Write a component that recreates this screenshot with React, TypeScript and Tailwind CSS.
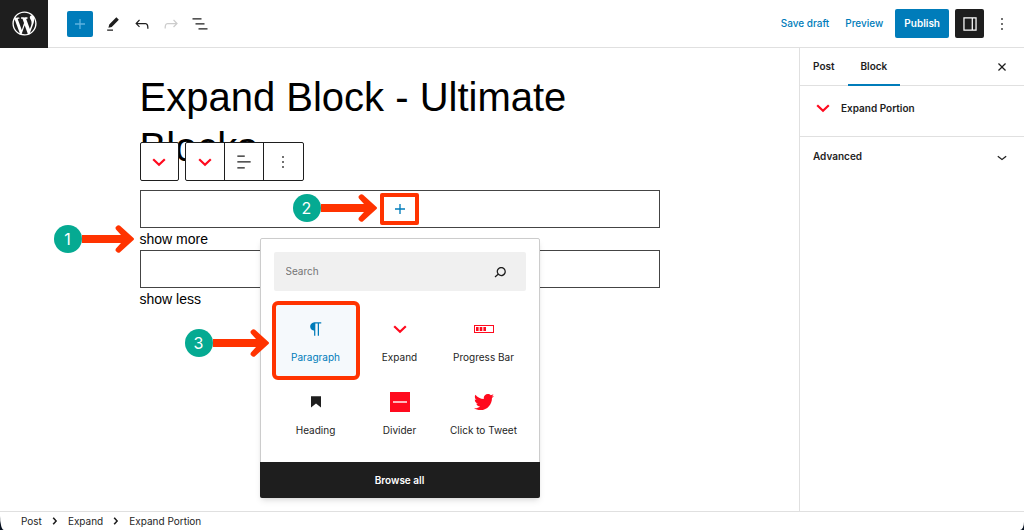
import React, { useState } from 'react'
import { FaTwitter } from 'react-icons/fa'

const icons = {
  plus: 'M18 11.2h-5.2V6h-1.6v5.2H6v1.6h5.2V18h1.6v-5.2H18z',
  edit: 'm19 7-3-3-8.5 8.5-1 4 4-1L19 7Zm-7 11.5H5V20h7v-1.5Z',
  undo: 'M18.3 11.7c-.6-.6-1.4-.9-2.3-.9H6.7l2.9-3.3-1.1-1-4.5 5L8.5 16l1-1-2.7-2.7H16c.5 0 .9.2 1.3.5 1 1 1 3.4 1 4.5v.3h1.5v-.2c0-1.5 0-4.3-1.5-5.7z',
  redo: 'M15.6 6.5l-1.1 1 2.9 3.3H8c-.9 0-1.7.3-2.3.9-1.4 1.5-1.4 4.2-1.4 5.6v.2h1.5v-.3c0-1.1 0-3.5 1-4.5.3-.3.7-.5 1.3-.5h9.2L14.5 15l1.1 1.1 4.6-4.6-4.6-5z',
  listView: 'M13.8 5.2H3v1.5h10.8V5.2zm-3.6 12v1.5H21v-1.5H10.2zm7.2-6H6.6v1.5h10.8v-1.5z',
  sidebar: 'M4 4h16v16H4V4zm1.5 1.5v13H14v-13H5.5zm10 0v13h3v-13h-3z',
  more: 'M13 19h-2v-2h2v2zm0-6h-2v-2h2v2zm0-6h-2V5h2v2z',
  close: 'M12 13.06l3.712 3.713 1.061-1.06L13.061 12l3.712-3.712-1.06-1.06L12 10.938 8.288 7.227l-1.061 1.06L10.939 12l-3.712 3.712 1.06 1.061L12 13.061z',
  chevronDown: 'M17.5 11.6L12 16l-5.5-4.4.9-1.2L12 14l4.5-3.6 1 1.2z',
  chevronRight: 'M10.2 6.2 8.4 7.7 12.2 12l-3.8 4.3 1.8 1.5L15.2 12z',
  alignLeft: 'M4 19.8h8.9v-1.5H4v1.5zm8.9-15.6H4v1.5h8.9V4.2zm-8.9 7v1.5h16v-1.5H4z',
  search: 'M13.5 6C10.5 6 8 8.5 8 11.5c0 1.1.3 2.1.9 3l-3.4 3 1 1.1 3.4-2.9c1 .9 2.2 1.4 3.6 1.4 3 0 5.5-2.5 5.5-5.5C19 8.500 16.500 6 13.500 6zm0 9.500c-2.200 0-4-1.800-4-4s1.800-4 4-4 4 1.800 4 4-1.800 4-4 4z',
  paragraph: 'M18.3 4H9.9v-.1l-.9.2c-2.3.4-4 2.4-4 4.8s1.7 4.4 4 4.8l.7.1V20h1.5V5.5h2.9V20h1.5V5.5h2.7V4z',
  heading: 'M6 5V18.5911L12 13.8473L18 18.5911V5H6Z',
}

interface IconProps {
  name: keyof typeof icons
  className?: string
}

const Icon: React.FC<IconProps> = ({ name, className = 'size-5' }) => (
  <svg viewBox="0 0 24 24" fill="currentColor" className={className} aria-hidden="true">
    <path d={icons[name]} />
  </svg>
)

const WordPressLogo: React.FC = () => (
  <svg viewBox="-2 -2 24 24" fill="currentColor" className="size-[29px]" aria-hidden="true">
    <path d="M20 10c0-5.51-4.49-10-10-10C4.48 0 0 4.49 0 10c0 5.52 4.48 10 10 10 5.51 0 10-4.48 10-10zM7.78 15.37L4.37 6.22c.55-.02 1.17-.08 1.17-.08.5-.06.44-1.13-.06-1.11 0 0-1.45.11-2.37.11-.18 0-.37 0-.58-.01C4.12 2.69 6.87 1.11 10 1.11c2.33 0 4.45.87 6.05 2.34-.68-.11-1.65.39-1.65 1.58 0 .74.45 1.36.9 2.1.35.61.55 1.36.55 2.46 0 1.49-1.4 5-1.4 5l-3.03-8.37c.54-.02.82-.17.82-.17.5-.05.44-1.25-.06-1.22 0 0-1.44.12-2.38.12-.87 0-2.33-.12-2.33-.12-.5-.03-.56 1.2-.06 1.22l.92.08 1.26 3.41zM17.41 10c.24-.64.74-1.87.43-4.25.7 1.29 1.05 2.71 1.05 4.25 0 3.29-1.73 6.24-4.4 7.78.97-2.59 1.94-5.2 2.92-7.78zM6.1 18.09C3.12 16.65 1.11 13.53 1.11 10c0-1.3.23-2.48.72-3.59C3.25 10.3 4.67 14.2 6.1 18.09zm4.03-6.63l2.58 6.98c-.86.29-1.76.45-2.71.45-.79 0-1.57-.11-2.29-.33.81-2.38 1.62-4.74 2.42-7.1z" />
  </svg>
)

const ExpandIcon: React.FC = () => (
  <svg viewBox="0 0 20 20" fill="none" className="size-5 text-[#ff0a1e]" aria-hidden="true">
    <path d="M4.2 7.2 10 12.8l5.8-5.6" stroke="currentColor" strokeWidth="2.2" />
  </svg>
)

const ProgressBarIcon: React.FC = () => (
  <svg viewBox="0 0 20 20" className="size-5 text-[#ff0a1e]" aria-hidden="true">
    <rect x="0.5" y="6.5" width="19" height="7" fill="none" stroke="currentColor" />
    <path d="M2 8h2.6v4H2zM5.700 8h2.600v4H5.700zM9.400 8h2.600v4H9.400z" fill="currentColor" />
  </svg>
)

const DividerIcon: React.FC = () => (
  <svg viewBox="0 0 20 20" className="size-5" aria-hidden="true">
    <rect width="20" height="20" fill="#ff0a1e" />
    <rect x="3" y="9.3" width="14" height="1.4" fill="#fff" />
  </svg>
)

const blocks = [
  { label: 'Paragraph', icon: <Icon name="paragraph" /> },
  { label: 'Expand', icon: <ExpandIcon /> },
  { label: 'Progress Bar', icon: <ProgressBarIcon /> },
  { label: 'Heading', icon: <Icon name="heading" /> },
  { label: 'Divider', icon: <DividerIcon /> },
  { label: 'Click to Tweet', icon: <FaTwitter className="size-5 text-[#ff0a1e]" /> },
]

// Numbered marker with an arrow pointing to the right
const Step: React.FC<{ number: number; className: string }> = ({ number, className }) => (
  <div className={`absolute flex items-center font-[Inter,sans-serif] ${className}`}>
    <span className="flex size-7 items-center justify-center rounded-full bg-[#05aa92] text-base text-white">
      {number}
    </span>
    <span className="h-2 flex-1 bg-[#ff3300]" />
    <svg viewBox="0 0 19 28" className="h-7 w-[19px]" fill="#ff3300" aria-hidden="true">
      <path d="M0 10h6L1 4.5Q0 3 1 1.8L2.500.6Q4-.2 5 .8L18.500 13q1 1 0 2L5 27.200q-1 1-2.500.200L1 26.200q-1-1.200 0-2.700L6 18H0z" />
    </svg>
  </div>
)

const Inserter: React.FC = () => {
  const [query, setQuery] = useState('')
  const visible = blocks.filter(b => b.label.toLowerCase().includes(query.toLowerCase()))

  return (
    <div className="absolute top-12 left-1/2 z-10 w-[280px] -translate-x-1/2 rounded-xs border border-[#ccc] bg-white font-[Inter,sans-serif] text-[10px] text-[#1e1e1e] shadow-md">
      <div className="px-[13px] pt-[13px]">
        <div className="flex h-[39px] items-center rounded-xs bg-[#f0f0f0] pr-4 pl-3">
          <input
            aria-label="Search"
            value={query}
            onChange={e => setQuery(e.target.value)}
            placeholder="Search"
            className="min-w-0 flex-1 bg-transparent text-[10px] outline-none placeholder:text-[#757575]"
          />
          <Icon name="search" />
        </div>
      </div>
      <div className="grid grid-cols-3 px-[13px] pt-[13px] pb-3">
        {visible.map(block => (
          <button
            key={block.label}
            className="group relative flex h-[73px] flex-col items-center justify-center gap-2.5 pt-0.5 whitespace-nowrap first:bg-[#f5f9fc] first:text-[#007cba]"
          >
            {block.icon}
            <span className="leading-4">{block.label}</span>
            <span className="absolute -inset-x-0.5 -inset-y-[3px] hidden rounded-md border-4 border-[#ff3300] group-first:block" />
          </button>
        ))}
      </div>
      <button className="-mx-px -mb-px block h-9 w-[280px] rounded-b-xs bg-[#1e1e1e] font-semibold text-white">
        Browse all
      </button>
    </div>
  )
}

const App: React.FC = () => {
  const [tab, setTab] = useState('Block')

  return (
    <div className="bg-[#06101f]">
      <div className="flex min-h-screen flex-col overflow-hidden rounded-br-[4px_8px] rounded-bl-[4px_14px] bg-white font-[Inter,sans-serif] text-[10px] text-[#1e1e1e]">
        {/* Top toolbar */}
        <header className="flex h-12 items-center border-b border-[#e0e0e0]">
          <a href="#posts" aria-label="View posts" className="flex size-12 items-center justify-center bg-[#1e1e1e] text-white">
            <WordPressLogo />
          </a>
          <div className="ml-[19px] flex items-center gap-[9px]">
            <button aria-label="Add block" className="mr-px flex size-[26px] items-center justify-center rounded-xs bg-[#007cba] text-[#5eb3e0]">
              <Icon name="plus" />
            </button>
            <button aria-label="Tools"><Icon name="edit" /></button>
            <button aria-label="Undo"><Icon name="undo" /></button>
            <button aria-label="Redo" disabled className="text-[#ccc]"><Icon name="redo" /></button>
            <button aria-label="List view"><Icon name="listView" /></button>
          </div>
          <div className="ml-auto flex items-center">
            <button className="font-medium text-[#007cba]">Save draft</button>
            <button className="ml-4 font-medium text-[#007cba]">Preview</button>
            <button className="ml-3 h-[29px] rounded-xs bg-[#007cba] px-[9px] font-semibold text-white">Publish</button>
            <button aria-label="Settings" className="ml-1.5 flex size-[29px] items-center justify-center rounded-xs bg-[#1e1e1e] text-white">
              <Icon name="sidebar" />
            </button>
            <button aria-label="Options" className="mr-3 ml-2"><Icon name="more" /></button>
          </div>
        </header>

        <div className="flex flex-1">
          {/* Editor canvas */}
          <main className="flex-1">
            <div className="relative mx-auto w-[520px] max-w-full pt-6 font-['Liberation_Sans',sans-serif] text-sm text-black">
              <h1 className="text-[40px] leading-[50px]">Expand Block - Ultimate Blocks</h1>

              <div className="absolute top-[94px] left-0 flex gap-1.5 text-[#1e1e1e]">
                <button aria-label="Select parent block" className="flex size-[39px] items-center justify-center rounded-xs border border-[#1e1e1e] bg-white">
                  <ExpandIcon />
                </button>
                <div className="flex h-[39px] divide-x divide-[#1e1e1e] rounded-xs border border-[#1e1e1e] bg-white">
                  <button aria-label="Expand Portion" className="flex w-[39px] items-center justify-center"><ExpandIcon /></button>
                  <button aria-label="Align" className="flex w-[39px] items-center justify-center"><Icon name="alignLeft" /></button>
                  <button aria-label="Options" className="flex w-[39px] items-center justify-center"><Icon name="more" /></button>
                </div>
              </div>

              <div className="relative mt-[18px]">
                <div className="flex h-[38px] items-center justify-center border border-[#444]">
                  <button aria-label="Add block" className="flex h-8 w-[39px] items-center justify-center rounded-xs border-4 border-[#ff3300] text-[#007cba]">
                    <Icon name="plus" />
                  </button>
                </div>
                <Step number={2} className="top-1 left-[153px] w-[84px]" />
                <Inserter />
              </div>
              <p className="leading-[22px]">show more</p>
              <div className="h-[38px] border border-[#444]" />
              <p className="leading-[22px]">show less</p>

              <Step number={1} className="top-[177px] -left-[86px] w-20" />
              <Step number={3} className="top-[281px] left-[45px] z-20 w-[84px]" />
            </div>
          </main>

          {/* Settings sidebar */}
          <aside className="w-[225px] border-l border-[#e0e0e0] font-semibold">
            <div className="flex h-[38px] items-stretch border-b border-[#e0e0e0]">
              {['Post', 'Block'].map(name => (
                <button
                  key={name}
                  onClick={() => setTab(name)}
                  className={`-mb-px border-b-2 px-[13px] ${tab === name ? 'border-[#007cba]' : 'border-transparent'}`}
                >
                  {name}
                </button>
              ))}
              <button aria-label="Close settings" className="mr-3 ml-auto"><Icon name="close" /></button>
            </div>
            <div className="flex h-[51px] items-start gap-2 border-b border-[#e0e0e0] px-[13px] pt-3">
              <ExpandIcon />
              <h2 className="leading-5">Expand Portion</h2>
            </div>
            <button className="flex h-[39px] w-full items-center justify-between pr-3 pl-[13px]">
              Advanced
              <Icon name="chevronDown" />
            </button>
          </aside>
        </div>

        {/* Block breadcrumb */}
        <footer className="flex h-[19px] items-center gap-[5px] border-t border-[#e0e0e0] px-[21px]">
          <a href="#post">Post</a>
          <Icon name="chevronRight" className="size-4" />
          <a href="#expand">Expand</a>
          <Icon name="chevronRight" className="size-4" />
          <span>Expand Portion</span>
        </footer>
      </div>
    </div>
  )
}

export default App
